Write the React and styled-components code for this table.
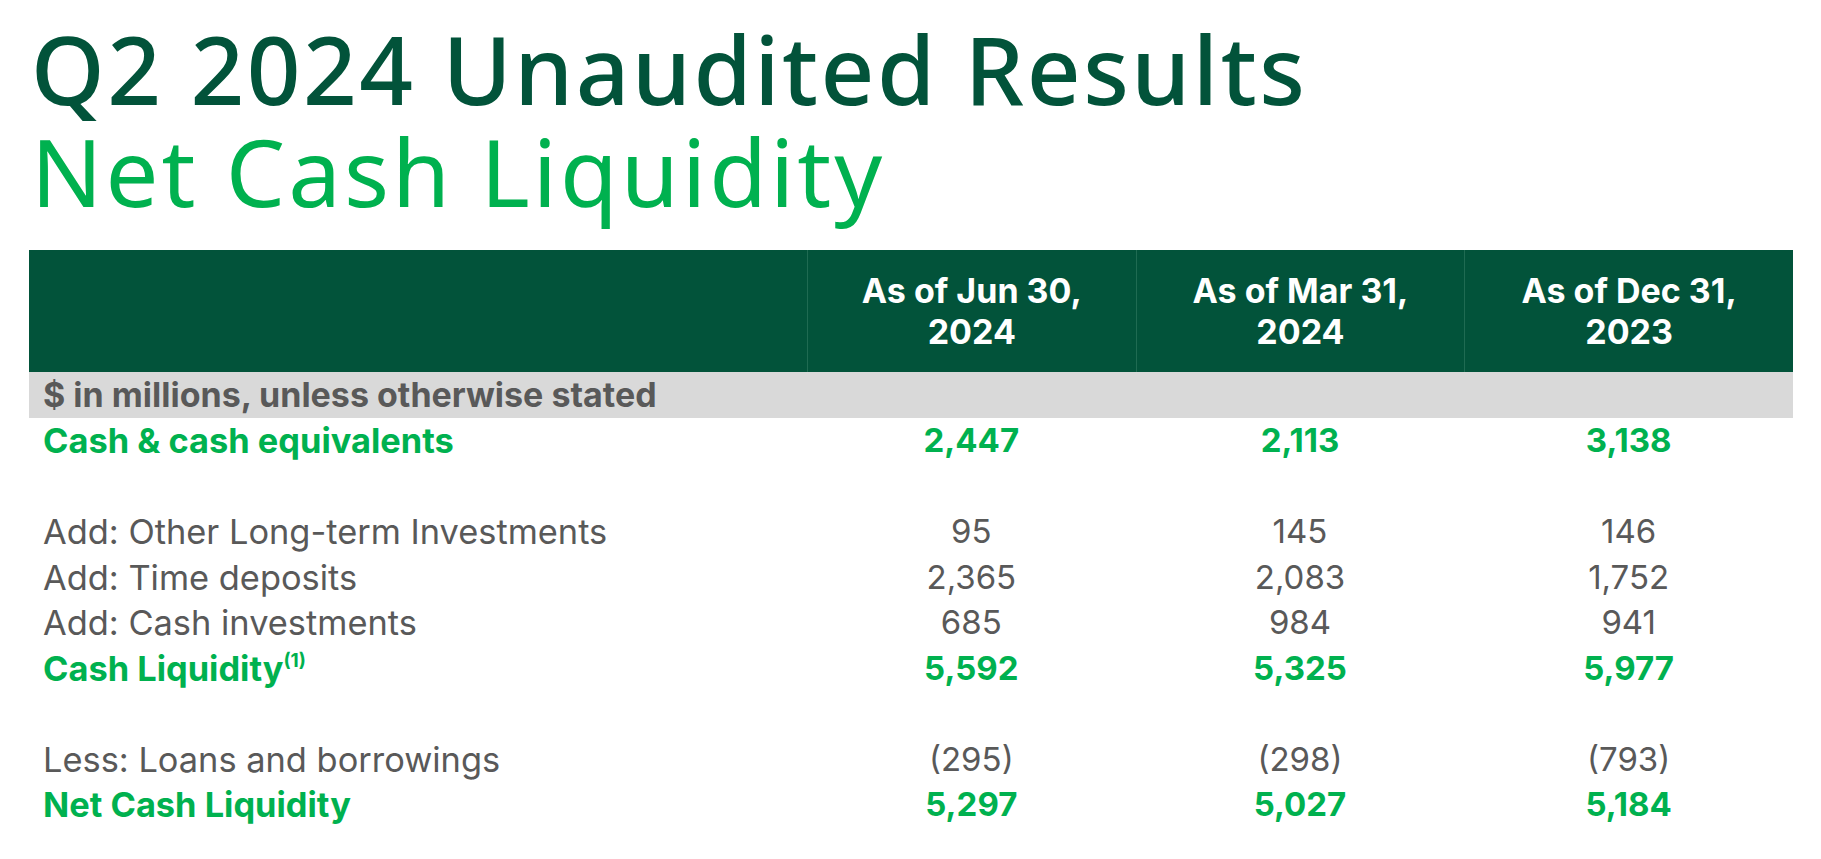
import styled, { createGlobalStyle } from 'styled-components';

const GlobalStyle = createGlobalStyle`
  html, body {
    margin: 0;
    padding: 0;
    background: #ffffff;
  }
`;

const Page = styled.div`
  width: 1821px;
  height: 859px;
  box-sizing: border-box;
  padding: 18px 28px 0 29px;
  background: #ffffff;
  overflow: hidden;
`;

const Title = styled.h1`
  margin: 0 0 0 2px;
  font-family: 'Noto Sans', sans-serif;
  font-size: 94px;
  line-height: 102px;
  font-weight: ${(props) => (props.$sub ? 400 : 500)};
  color: ${(props) => (props.$sub ? '#00b14f' : '#02533a')};
  letter-spacing: ${(props) => (props.$sub ? '3px' : '2.5px')};
  white-space: nowrap;
`;

const Table = styled.div`
  margin-top: 28px;
  width: 1764px;
  display: grid;
  grid-template-columns: 778px repeat(3, 1fr);
  font-family: 'Inter', 'Roboto', sans-serif;
`;

const HeadCell = styled.div`
  height: 122px;
  background: #02533a;
  color: #ffffff;
  font-weight: 700;
  font-size: 34px;
  line-height: 41px;
  text-align: center;
  display: flex;
  align-items: center;
  justify-content: center;
  border-left: ${(props) => (props.$first ? 'none' : '1px solid #1f6b52')};
`;

const Band = styled.div`
  grid-column: 1 / -1;
  height: 46px;
  background: #d9d9d9;
  color: #595959;
  font-weight: 700;
  font-size: 34px;
  line-height: 46px;
  padding-left: 14px;
  white-space: nowrap;
`;

const Cell = styled.div`
  height: 45.5px;
  line-height: 45.5px;
  font-size: ${(props) => (props.$label ? '34.4px' : '33px')};
  font-weight: ${(props) => (props.$bold ? 700 : 400)};
  color: ${(props) => (props.$bold ? '#00b14f' : '#595959')};
  text-align: ${(props) => (props.$label ? 'left' : 'center')};
  padding-left: ${(props) => (props.$label ? '14px' : '0')};
  white-space: nowrap;
`;

const Sup = styled.sup`
  font-size: 19px;
  line-height: 0;
  vertical-align: 14px;
`;

const rows = [
  { label: 'Cash & cash equivalents', values: ['2,447', '2,113', '3,138'], bold: true },
  { spacer: true },
  { label: 'Add: Other Long-term Investments', values: ['95', '145', '146'] },
  { label: 'Add: Time deposits', values: ['2,365', '2,083', '1,752'] },
  { label: 'Add: Cash investments', values: ['685', '984', '941'] },
  { label: 'Cash Liquidity', note: '(1)', values: ['5,592', '5,325', '5,977'], bold: true },
  { spacer: true },
  { label: 'Less: Loans and borrowings', values: ['(295)', '(298)', '(793)'] },
  { label: 'Net Cash Liquidity', values: ['5,297', '5,027', '5,184'], bold: true },
];

const headers = [
  ['As of Jun 30,', '2024'],
  ['As of Mar 31,', '2024'],
  ['As of Dec 31,', '2023'],
];

const App = () => (
  <>
    <GlobalStyle />
    <Page>
      <Title>Q2 2024 Unaudited Results</Title>
      <Title $sub>Net Cash Liquidity</Title>
      <Table>
        <HeadCell $first />
        {headers.map((h) => (
          <HeadCell key={h[0]}>
            <div>
              {h[0]}
              <br />
              {h[1]}
            </div>
          </HeadCell>
        ))}
        <Band>$ in millions, unless otherwise stated</Band>
        {rows.map((row, i) => (row.spacer ? (
          [0, 1, 2, 3].map((c) => <Cell key={`s${i}-${c}`} />)
        ) : (
          [
            <Cell key={`l${i}`} $label $bold={row.bold}>
              {row.label}
              {row.note && <Sup>{row.note}</Sup>}
            </Cell>,
            ...row.values.map((v, c) => (
              <Cell key={`v${i}-${c}`} $bold={row.bold}>{v}</Cell>
            )),
          ]
        )))}
      </Table>
    </Page>
  </>
);

export default App;
